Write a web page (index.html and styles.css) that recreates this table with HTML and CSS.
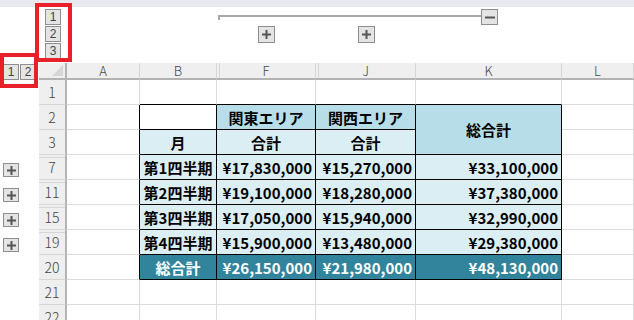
FILE: index.html
```html
<!DOCTYPE html>
<html lang="ja">
<head>
<meta charset="utf-8">
<link rel="stylesheet" href="styles.css">
</head>
<body>
<div class="topband"></div>
<div class="sheet">
  <!-- outline area above column headers -->
  <div class="gut"></div>
  <div class="levels">
    <span class="btn lvl">1</span><span class="btn lvl">2</span><span class="btn lvl">3</span>
  </div>
  <div></div>
  <div></div>
  <div class="ol ol-first"><div class="ol-line"></div><span class="btn pm"><svg width="9" height="9" viewBox="0 0 9 9"><path d="M3.5 0h2v9h-2zM0 3.5h9v2H0z" fill="#555"/></svg></span></div>
  <div class="ol"><div class="ol-line"></div><span class="btn pm"><svg width="9" height="9" viewBox="0 0 9 9"><path d="M3.5 0h2v9h-2zM0 3.5h9v2H0z" fill="#555"/></svg></span></div>
  <div class="ol-k"><div class="ol-line"></div><span class="btn pm minus"><svg width="10" height="9" viewBox="0 0 10 9"><path d="M0 3.5h10v2H0z" fill="#555"/></svg></span></div>
  <div></div>

  <!-- column header row -->
  <div class="gut rowlv"><span class="btn lvl">1</span><span class="btn lvl">2</span></div>
  <div class="ch corner"></div>
  <div class="ch">A</div>
  <div class="ch">B</div>
  <div class="ch hid">F</div>
  <div class="ch hid">J</div>
  <div class="ch">K</div>
  <div class="ch">L</div>

  <!-- row 1 -->
  <div class="gut"></div>
  <div class="rh">1</div>
  <div class="c"></div>
  <div class="c eb"></div>
  <div class="c eb"></div>
  <div class="c eb"></div>
  <div class="c eb"></div>
  <div class="c"></div>

  <!-- row 2 -->
  <div class="gut"></div>
  <div class="rh">2</div>
  <div class="c er"></div>
  <div class="t"></div>
  <div class="t hd">関東エリア</div>
  <div class="t hd">関西エリア</div>
  <div class="t hd span2">総合計</div>
  <div class="c"></div>

  <!-- row 3 -->
  <div class="gut"></div>
  <div class="rh">3</div>
  <div class="c er"></div>
  <div class="t lt">月</div>
  <div class="t lt">合計</div>
  <div class="t lt">合計</div>
  <div class="c"></div>

  <!-- row 7 -->
  <div class="gut"><span class="btn gp"><svg width="9" height="9" viewBox="0 0 9 9"><path d="M3.5 0h2v9h-2zM0 3.5h9v2H0z" fill="#555"/></svg></span></div>
  <div class="rh hidr">7</div>
  <div class="c er"></div>
  <div class="t lt">第1四半期</div>
  <div class="t lt num">¥17,830,000</div>
  <div class="t lt num">¥15,270,000</div>
  <div class="t lt num">¥33,100,000</div>
  <div class="c"></div>

  <!-- row 11 -->
  <div class="gut"><span class="btn gp"><svg width="9" height="9" viewBox="0 0 9 9"><path d="M3.5 0h2v9h-2zM0 3.5h9v2H0z" fill="#555"/></svg></span></div>
  <div class="rh hidr">11</div>
  <div class="c er"></div>
  <div class="t lt">第2四半期</div>
  <div class="t lt num">¥19,100,000</div>
  <div class="t lt num">¥18,280,000</div>
  <div class="t lt num">¥37,380,000</div>
  <div class="c"></div>

  <!-- row 15 -->
  <div class="gut"><span class="btn gp"><svg width="9" height="9" viewBox="0 0 9 9"><path d="M3.5 0h2v9h-2zM0 3.5h9v2H0z" fill="#555"/></svg></span></div>
  <div class="rh hidr">15</div>
  <div class="c er"></div>
  <div class="t lt">第3四半期</div>
  <div class="t lt num">¥17,050,000</div>
  <div class="t lt num">¥15,940,000</div>
  <div class="t lt num">¥32,990,000</div>
  <div class="c"></div>

  <!-- row 19 -->
  <div class="gut"><span class="btn gp"><svg width="9" height="9" viewBox="0 0 9 9"><path d="M3.5 0h2v9h-2zM0 3.5h9v2H0z" fill="#555"/></svg></span></div>
  <div class="rh hidr">19</div>
  <div class="c er"></div>
  <div class="t lt">第4四半期</div>
  <div class="t lt num">¥15,900,000</div>
  <div class="t lt num">¥13,480,000</div>
  <div class="t lt num">¥29,380,000</div>
  <div class="c"></div>

  <!-- row 20 -->
  <div class="gut"></div>
  <div class="rh">20</div>
  <div class="c er"></div>
  <div class="t tot">総合計</div>
  <div class="t tot num">¥26,150,000</div>
  <div class="t tot num">¥21,980,000</div>
  <div class="t tot num">¥48,130,000</div>
  <div class="c"></div>

  <!-- row 21 -->
  <div class="gut"></div>
  <div class="rh">21</div>
  <div class="c"></div>
  <div class="c"></div>
  <div class="c"></div>
  <div class="c"></div>
  <div class="c"></div>
  <div class="c"></div>

  <!-- row 22 -->
  <div class="gut"></div>
  <div class="rh">22</div>
  <div class="c"></div>
  <div class="c"></div>
  <div class="c"></div>
  <div class="c"></div>
  <div class="c"></div>
  <div class="c"></div>
</div>

<div class="anno anno-col"></div>
<div class="anno anno-row"></div>
</body>
</html>
```

FILE: styles.css
```css
* { box-sizing: border-box; }
html, body { margin: 0; padding: 0; }
body {
  width: 634px;
  height: 320px;
  overflow: hidden;
  position: relative;
  background: #fff;
  font-family: "Noto Sans CJK JP", "Noto Sans", sans-serif;
  color: #000;
}
.topband { height: 7px; background: #e7e9ef; }

.sheet {
  display: grid;
  grid-template-columns: 39px 28px 73px 77px 99px 100px 146px 72px;
  grid-template-rows: 56px 17px repeat(10, 25px);
}

/* outline buttons */
.btn {
  display: flex;
  align-items: center;
  justify-content: center;
  width: 16px;
  height: 16px;
  border: 1px solid #8e8e8e;
  background: #e4e4e4;
}
.lvl {
  font-family: "Liberation Sans", "DejaVu Sans", sans-serif;
  font-size: 12px;
  color: #444;
  line-height: 1;
}
.pm { width: 17px; height: 17px; }
.minus { height: 16px; }
.gp { width: 16px; height: 14px; margin: 8px 0 0 3px; }

.gut { background: #fff; }
.levels {
  display: flex;
  flex-direction: column;
  align-items: center;
  gap: 1px;
  padding-top: 2px;
}
.rowlv {
  display: flex;
  align-items: center;
  gap: 1px;
  padding-left: 3px;
}

/* column outline bar */
.ol {
  display: flex;
  flex-direction: column;
  align-items: center;
  padding-top: 8px;
}
.ol .ol-line {
  align-self: stretch;
  height: 2px;
  background: #a8a8a8;
  margin-bottom: 9px;
}
.ol-first .ol-line { margin-left: 1px; position: relative; }
.ol-first .ol-line::before {
  content: "";
  position: absolute;
  left: 0;
  top: 0;
  width: 2px;
  height: 5px;
  background: #a8a8a8;
}
.ol-k {
  display: flex;
  align-items: flex-start;
  padding-top: 2px;
}
.ol-k .ol-line {
  width: 65px;
  height: 2px;
  margin-top: 6px;
  background: #a8a8a8;
}

/* headers */
.ch {
  background: #efefef;
  border-right: 1px solid #d6d6d6;
  border-bottom: 2px solid #b3b3b3;
  display: flex;
  align-items: center;
  justify-content: center;
  font-size: 13px;
  font-weight: 300;
  color: #444;
  line-height: 1;
}
.ch.hid { box-shadow: inset 2px 0 0 #efefef, inset 3px 0 0 #d6d6d6; }
.corner { position: relative; border-right: 2px solid #b3b3b3; }
.corner::after {
  content: "";
  position: absolute;
  right: 2px;
  bottom: 2px;
  border-style: solid;
  border-width: 0 0 11px 11px;
  border-color: transparent transparent #d6d6d6 transparent;
}
.rh {
  background: #efefef;
  border-right: 2px solid #b3b3b3;
  border-bottom: 1px solid #d6d6d6;
  display: flex;
  align-items: center;
  justify-content: center;
  font-size: 14px;
  font-weight: 300;
  color: #444;
}
.rh.hidr { box-shadow: inset 0 2px 0 #efefef, inset 0 3px 0 #d6d6d6; }

/* cells */
.c {
  border-right: 1px solid #dcdcdc;
  border-bottom: 1px solid #dcdcdc;
}
.c.er { border-right-color: #000; }
.c.eb { border-bottom-color: #000; }

.t {
  border-right: 1px solid #000;
  border-bottom: 1px solid #000;
  display: flex;
  align-items: center;
  justify-content: center;
  font-size: 15px;
  font-weight: 700;
  line-height: 1;
  white-space: nowrap;
  background: #fff;
}
.t.hd { background: #b7dde8; }
.t.lt { background: #daeef3; }
.t.tot { background: #31849b; color: #fff; }
.t.num { justify-content: flex-end; padding-right: 3px; }
.span2 { grid-row: span 2; }

/* annotation boxes */
.anno {
  position: absolute;
  border: 4px solid #e8202a;
}
.anno-col { left: 35px; top: 3px; width: 37px; height: 59px; }
.anno-row { left: 0; top: 53px; width: 38px; height: 35px; }
```
